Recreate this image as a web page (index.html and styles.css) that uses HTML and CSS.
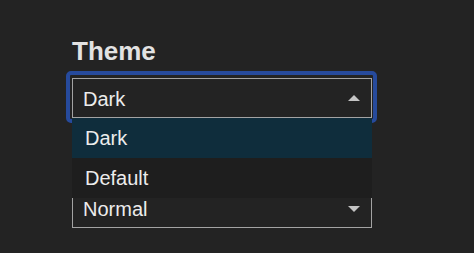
FILE: index.html
```html
<!DOCTYPE html>
<html>
<head>
<meta charset="utf-8">
<link rel="stylesheet" href="styles.css">
</head>
<body>
<div class="panel">
  <div class="field">
    <div class="label">Theme</div>
    <div class="select-wrap">
      <div class="select focused">
        <span class="value">Dark</span>
        <span class="arrow up"></span>
      </div>
      <ul class="menu">
        <li class="option active">Dark</li>
        <li class="option">Default</li>
      </ul>
    </div>
  </div>
  <div class="field second">
    <div class="select">
      <span class="value">Normal</span>
      <span class="arrow down"></span>
    </div>
  </div>
</div>
</body>
</html>
```

FILE: styles.css
```css
html, body {
  margin: 0;
  padding: 0;
  background: #232323;
}
body {
  font-family: "Liberation Sans", Arial, Helvetica, sans-serif;
  color: #e6e6e6;
  width: 474px;
  height: 253px;
  overflow: hidden;
}
.panel {
  padding: 36px 0 0 72px;
  width: 300px;
}
.label {
  font-size: 26px;
  font-weight: bold;
  color: #e2e2e2;
  line-height: 30px;
  margin-bottom: 12px;
}
.select-wrap {
  position: relative;
}
.select {
  position: relative;
  box-sizing: border-box;
  height: 40px;
  border: 1px solid #a3a3a3;
  display: flex;
  align-items: center;
  justify-content: space-between;
  padding: 2px 10px 0 10px;
  font-size: 20px;
  color: #ececec;
}
.select.focused::after {
  content: "";
  position: absolute;
  left: -7px;
  right: -6px;
  top: -8px;
  bottom: -6px;
  border: 4px solid #264a9c;
  border-radius: 5px;
  pointer-events: none;
}
.arrow {
  width: 0;
  height: 0;
  border-left: 6px solid transparent;
  border-right: 6px solid transparent;
  margin-right: 1px;
}
.arrow.up {
  border-bottom: 6px solid #c4c4c4;
  margin-top: -2px;
}
.arrow.down {
  border-top: 6px solid #c4c4c4;
  margin-top: -1px;
}
.menu {
  position: absolute;
  left: 0;
  right: 0;
  top: 40px;
  margin: 0;
  padding: 0;
  list-style: none;
  background: #1e1e1e;
  z-index: 2;
}
.option {
  height: 40px;
  line-height: 40px;
  padding: 0 13px;
  font-size: 20px;
  color: #ececec;
}
.option.active {
  background: #0f2d3c;
}
.second {
  margin-top: 70px;
}
```
